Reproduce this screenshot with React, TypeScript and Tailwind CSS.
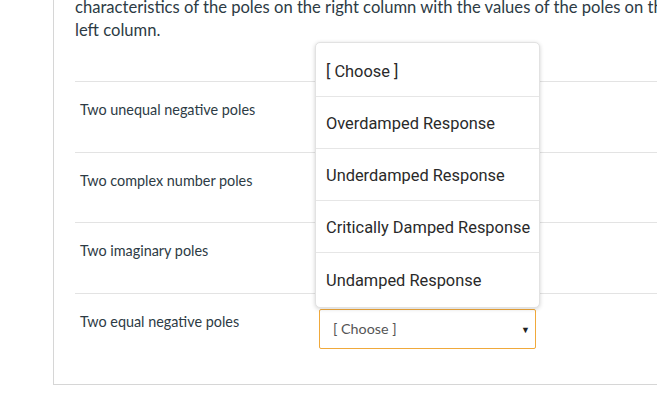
import React from "react";

const rows = [
  { label: "Two unequal negative poles", h: "h-[71px]" },
  { label: "Two complex number poles", h: "h-[70px]" },
  { label: "Two imaginary poles", h: "h-[71px]" },
  { label: "Two equal negative poles", h: "h-[71px]" },
];

const options = [
  "[ Choose ]",
  "Overdamped Response",
  "Underdamped Response",
  "Critically Damped Response",
  "Undamped Response",
];

const Select = ({ open }: { open?: boolean }) => (
  <div className="relative w-[217px]">
    {open && (
      <div className="absolute bottom-full left-[-4px] mb-[1px] z-20 w-[225px] bg-white rounded-[5px] border border-[#e2e2e2] shadow-[0_1px_4px_rgba(0,0,0,0.18)] py-[2px]">
        {options.map((o, i) => (
          <div
            key={o}
            className={`h-[52px] flex items-center pt-[4px] px-[10px] whitespace-nowrap text-[16.4px] text-[#2a2a2a] font-['Roboto',sans-serif] ${
              i < options.length - 1 ? "border-b border-[#e6e6e6]" : ""
            }`}
          >
            {o}
          </div>
        ))}
      </div>
    )}
    <div
      className={`h-[40px] flex items-center justify-between pl-[13px] pr-[5px] bg-white rounded-[2px] border ${
        open ? "border-[#f0a93b]" : "border-[#c7cdd1]"
      }`}
    >
      {open && <span className="text-[14.3px] text-[#555]">[ Choose ]</span>}
      {open && <span className="text-[9px] text-[#222] leading-none">▼</span>}
    </div>
  </div>
);

export default function App() {
  return (
    <div className="w-[657px] h-[403px] overflow-hidden bg-white font-['Lato','Noto_Sans',sans-serif] text-[#2d3b45]">
      <div className="ml-[53px] w-[700px] border-l border-b border-[#d6d6d6] pl-[21px] pb-[20px]">
        <p className="mt-[-4px] text-[16.6px] leading-[23px] whitespace-nowrap">
          characteristics of the poles on the right column with the values of the poles on the
          <br />
          left column.
        </p>
        <div className="mt-[39px]">
          {rows.map((r, i) => (
            <div key={r.label} className={`${r.h} flex border-t border-[#e3e3e3]`}>
              <div className="w-[244px] pl-[5px] pt-[17px] text-[14.4px] leading-[21px]">{r.label}</div>
              <div className="pt-[15px]">
                <Select open={i === rows.length - 1} />
              </div>
            </div>
          ))}
        </div>
      </div>
    </div>
  );
}
